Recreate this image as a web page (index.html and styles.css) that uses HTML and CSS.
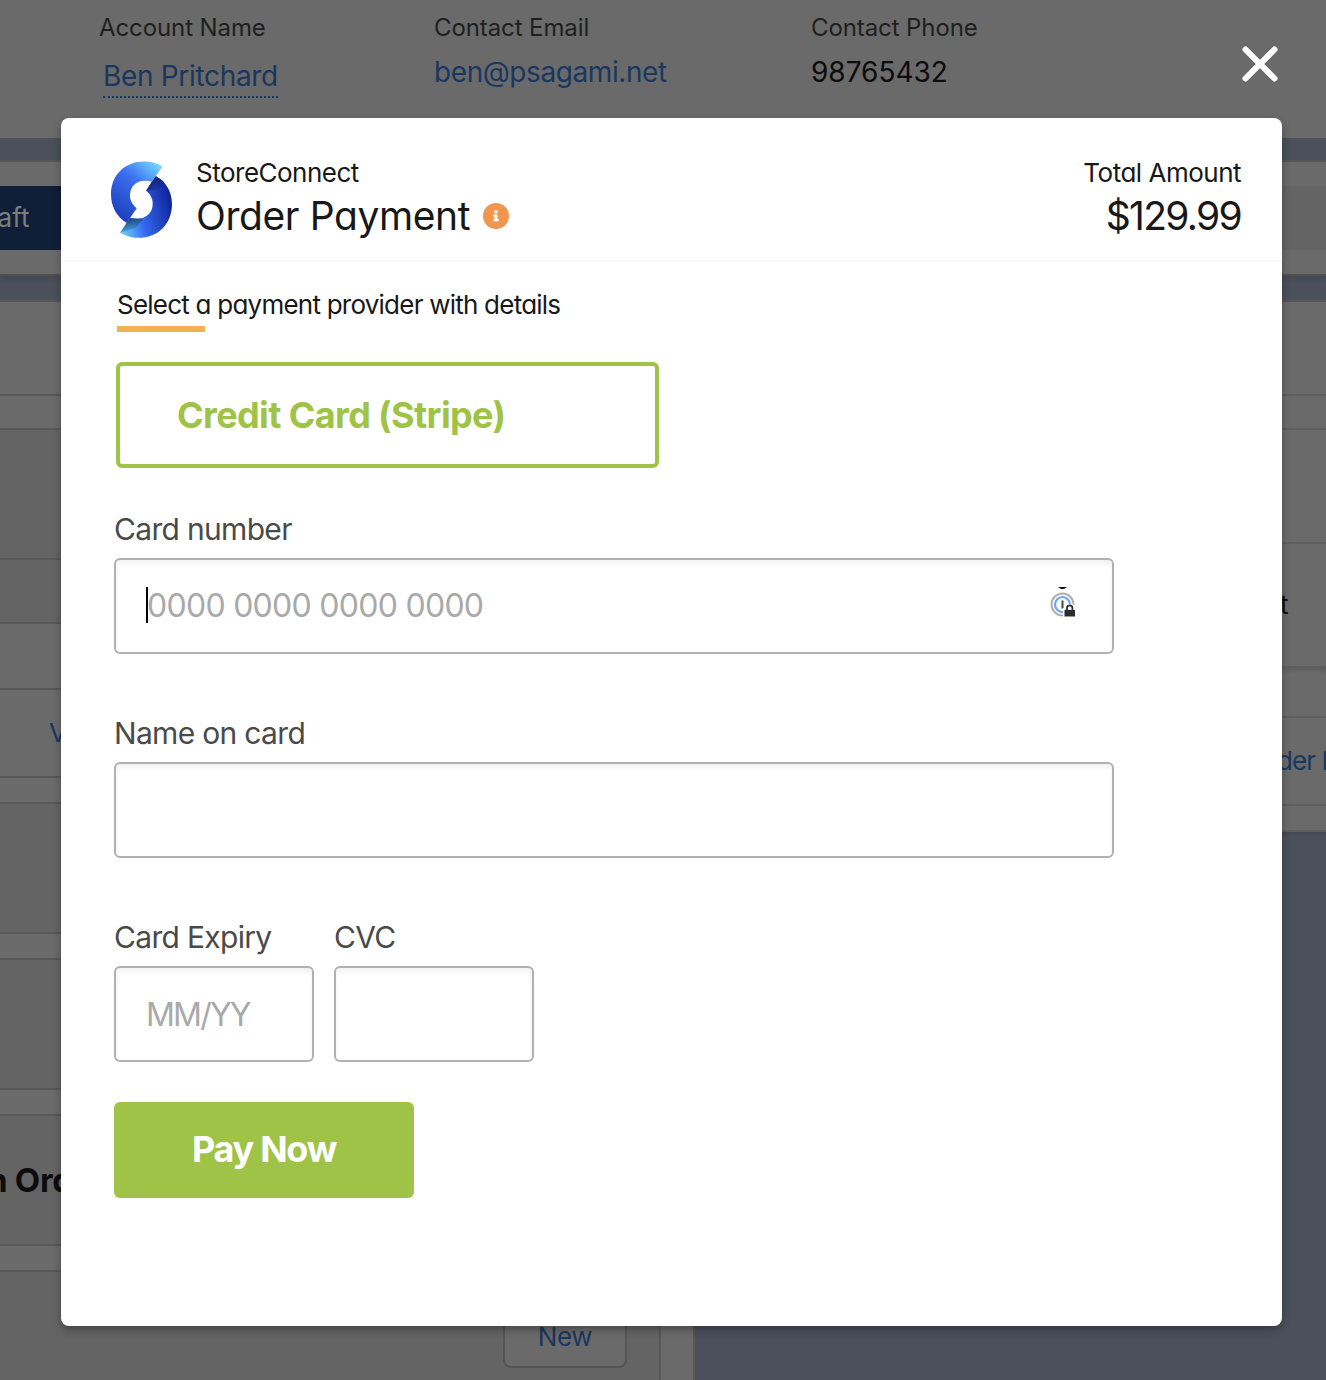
FILE: index.html
```html
<!DOCTYPE html>
<html lang="en">
<head>
    <meta charset="UTF-8">
    <title>Order Payment</title>
    <link rel="stylesheet" href="styles.css">
</head>
<body>

    <div class="page">
        <header class="record-header">
            <div class="field field-account">
                <span class="field-label">Account Name</span>
                <a class="field-value lookup">Ben Pritchard</a>
            </div>
            <div class="field field-email">
                <span class="field-label">Contact Email</span>
                <a class="field-value email">ben@psagami.net</a>
            </div>
            <div class="field">
                <span class="field-label">Contact Phone</span>
                <span class="field-value phone">98765432</span>
            </div>
        </header>

        <div class="path-card">
            <div class="path"><div class="stage"><span>Draft</span></div></div>
        </div>

        <div class="columns">
            <main class="related">
                <div class="row h92"></div>
                <div class="row h32"></div>
                <div class="row grey h128"></div>
                <div class="row grey h62"></div>
                <div class="row h64"></div>
                <div class="row h86 view-all"><a>View</a></div>
                <div class="row h24"></div>
                <div class="row grey h128"></div>
                <div class="row h24"></div>
                <div class="row grey h128"></div>
                <div class="row h24"></div>
                <div class="row grey h128 related-title"><h2>n Order</h2></div>
                <div class="row h24"></div>
                <div class="row grey last"><button class="new-button">New</button></div>
            </main>
            <aside class="side">
                <div class="row h92"></div>
                <div class="row h32"></div>
                <div class="row h112"></div>
                <div class="row h122 side-text"><span>t</span></div>
                <div class="row h48 shade"></div>
                <div class="row h86 side-link"><a>der Payment</a></div>
                <div class="row h24"></div>
            </aside>
        </div>
    </div>

    <button class="close" aria-label="Close">
        <svg width="36" height="36" viewBox="0 0 36 36"><path d="M3.5 3.5l29 29M32.5 3.5l-29 29" stroke="#fff" stroke-width="6" stroke-linecap="round"/></svg>
    </button>

    <section class="modal">
        <div class="modal-header">
            <svg class="logo" width="62" height="78" viewBox="0 0 62 78">
                <defs>
                    <linearGradient id="top" x1="0.9" y1="0" x2="0.2" y2="1">
                        <stop offset="0" stop-color="#78dcff"/>
                        <stop offset="0.4" stop-color="#3c70f2"/>
                        <stop offset="1" stop-color="#1c3cb8"/>
                    </linearGradient>
                    <linearGradient id="bottom" x1="0" y1="0.9" x2="1" y2="0.6">
                        <stop offset="0" stop-color="#6fd3ff"/>
                        <stop offset="0.45" stop-color="#3568ee"/>
                        <stop offset="1" stop-color="#1228a0"/>
                    </linearGradient>
                    <linearGradient id="fold-top" x1="0.2" y1="0.3" x2="0.9" y2="0.8">
                        <stop offset="0" stop-color="#12256e"/>
                        <stop offset="1" stop-color="#12256e" stop-opacity="0"/>
                    </linearGradient>
                    <linearGradient id="fold-bottom" x1="0.3" y1="0.2" x2="0.7" y2="0.9">
                        <stop offset="0" stop-color="#1d4f78"/>
                        <stop offset="1" stop-color="#1d4f78" stop-opacity="0"/>
                    </linearGradient>
                </defs>
                <path d="M44.500 15C55 20 61 31 61 43C61 63 47 76.800 27.500 76.800C20 76.800 14 74.500 9 71.700L19 57C30 60 41.700 55 41.700 43C41.700 37 39 32.500 35 29.700Z" fill="url(#bottom)"/>
                <path d="M44.500 15L35 29.700L51 28L54 21Z" fill="url(#fold-top)"/>
                <path d="M9 71.700L19 57L32 58L25 67Z" fill="url(#fold-bottom)"/>
                <path d="M51.500 5.500C46 2 40 .5 33 .5C14 .5 0 14 0 33C0 46 6 56 15.700 62L25.700 47.300C22 44 19 40 19 34.500C19 23 29 17 41 20.800Z" fill="url(#top)"/>
            </svg>
            <div class="heading">
                <div class="brand">StoreConnect</div>
                <h1><span class="title">Order Payment</span>
                    <svg width="26" height="26" viewBox="0 0 26 26"><circle cx="13" cy="13" r="13" fill="#f0964e"/><circle cx="13" cy="8.700" r="1.800" fill="#fff"/><path d="M10.300 11.500h4.200v4.800h1.200v2h-5.400v-2h1.200v-2.800h-1.200z" fill="#fff"/></svg>
                </h1>
            </div>
            <div class="total">
                <div class="total-label">Total Amount</div>
                <div class="amount">$129.99</div>
            </div>
        </div>

        <form class="payment">
            <p class="prompt">Select a payment provider with details</p>
            <button type="button" class="provider">Credit Card (Stripe)</button>

            <label class="control">
                <span>Card number</span>
                <div class="input">
                    <i class="caret"></i>
                    <span class="placeholder number">0000 0000 0000 0000</span>
                    <svg class="key" width="26" height="34" viewBox="0 0 26 34">
                        <path d="M8 1h9l-3 2h-3z" fill="#111"/>
                        <circle cx="12.500" cy="18.500" r="11" fill="none" stroke="#b0b0b0" stroke-width="2"/>
                        <circle cx="12.500" cy="18.500" r="7.500" fill="none" stroke="#6aa5fb" stroke-width="2.200"/>
                        <path d="M12.500 14.500v8" stroke="#444" stroke-width="2"/>
                        <path d="M13 22h1l2-4h7l3 4v10h-13z" fill="#fff"/>
                        <path d="M14.500 24h10.500v6.500h-10.500z" fill="#2b2b2b"/>
                        <path d="M17 24.500v-2.500a2.700 2.700 0 0 1 5.400 0v2.500" fill="none" stroke="#2b2b2b" stroke-width="1.800"/>
                    </svg>
                </div>
            </label>
            <label class="control">
                <span>Name on card</span>
                <div class="input"></div>
            </label>
            <div class="pair">
                <label class="control">
                    <span>Card Expiry</span>
                    <div class="input"><span class="placeholder expiry">MM/YY</span></div>
                </label>
                <label class="control">
                    <span>CVC</span>
                    <div class="input"></div>
                </label>
            </div>
            <button type="button" class="pay">Pay Now</button>
        </form>
    </section>

</body>
</html>
```
FILE: styles.css
```css
* {
    box-sizing: border-box;
}
body {
    margin: 0;
    height: 1380px;
    overflow: hidden;
    background-color: #4c505c;
    font-family: Inter, "Liberation Sans", sans-serif;
}
h1, h2, p {
    margin: 0;
    font-weight: normal;
}
button {
    padding: 0;
    border: none;
    font-family: inherit;
}
a {
    color: #19375f;
}

/* record page behind the modal */
.page {
    height: 1380px;
    overflow: hidden;
}
.record-header {
    display: flex;
    height: 138px;
    padding: 13px 0 0 99px;
    background-color: #6a6a6a;
}
.field {
    display: flex;
    flex-direction: column;
    align-items: flex-start;
}
.field-account {
    width: 335px;
}
.field-email {
    width: 377px;
}
.field-label {
    font-size: 24px;
    line-height: 30px;
    letter-spacing: -0.1px;
    color: #1f1f1f;
}
.field-value {
    margin-top: 12px;
    font-size: 28px;
    line-height: 34px;
}
.lookup {
    margin: 15px 0 0 4px;
    line-height: 36px;
    padding-bottom: 2px;
    letter-spacing: -0.32px;
    border-bottom: 2px dotted #19375f;
}
.email {
    letter-spacing: -0.42px;
}
.phone {
    color: #0c0c0c;
}
.path-card {
    margin: 22px 0 24px;
    height: 116px;
    padding: 24px 0;
    border-top: 2px solid #575757;
    border-bottom: 2px solid #505050;
    background-color: #6a6a6a;
    box-shadow: 0 3px 4px rgba(0, 0, 0, 0.1);
}
.path {
    height: 64px;
    background-color: #646464;
}
.stage {
    width: 400px;
    height: 64px;
    background-color: #101f38;
    color: #7e7e7e;
    font-size: 26px;
    line-height: 63px;
}
.stage span {
    margin-left: -31px;
}
.columns {
    display: flex;
    justify-content: space-between;
    align-items: flex-start;
}
.related {
    width: 695px;
    height: 1080px;
    border-top: 2px solid #575757;
    border-right: 2px solid #575757;
    background-color: #6a6a6a;
}
.side {
    width: 607px;
    border-top: 2px solid #575757;
    background-color: #6a6a6a;
    box-shadow: 0 3px 4px rgba(0, 0, 0, 0.1);
}
.row {
    box-sizing: content-box;
    border-bottom: 2px solid #585858;
}
.side .row {
    border-color: #5f5f5f;
}
.related .grey {
    width: 659px;
    background-color: #646464;
    border-right: 2px solid #585858;
}
.h24 { height: 24px; }
.h32 { height: 32px; }
.h48 { height: 48px; }
.h62 { height: 62px; }
.h64 { height: 64px; }
.h86 { height: 86px; }
.h92 { height: 92px; }
.h112 { height: 112px; }
.h122 { height: 122px; }
.h128 { height: 128px; }
.side .shade {
    box-shadow: inset 0 4px 4px -2px rgba(0, 0, 0, 0.15);
}
.view-all {
    padding-left: 49px;
    font-size: 26px;
    line-height: 86px;
}
.related-title h2 {
    margin-left: -13px;
    font-size: 33px;
    font-weight: 700;
    line-height: 129px;
    letter-spacing: -0.3px;
    color: #0c0c0c;
}
.last {
    height: 108px;
    display: flex;
    justify-content: flex-end;
}
.new-button {
    width: 124px;
    height: 64px;
    margin: 32px 32px 0 0;
    border: 2px solid #555;
    border-radius: 8px;
    background-color: #6a6a6a;
    color: #19375f;
    font-size: 26px;
    letter-spacing: -0.3px;
}
.side-text {
    padding-left: 561px;
    font-size: 26px;
    line-height: 122px;
    color: #0c0c0c;
}
.side-link {
    padding-left: 558px;
    font-size: 26px;
    line-height: 86px;
    letter-spacing: -0.9px;
    white-space: nowrap;
}

/* modal */
.close {
    position: absolute;
    left: 1242px;
    top: 46px;
    background: none;
}
.close svg {
    display: block;
}
.modal {
    position: absolute;
    left: 61px;
    top: 118px;
    width: 1221px;
    height: 1208px;
    border-radius: 8px;
    background-color: #fff;
    box-shadow: 0 4px 8px rgba(0, 0, 0, 0.3);
    color: #181818;
}
.modal-header {
    display: flex;
    height: 144px;
    padding: 36px 41px 0 50px;
    border-bottom: 2px solid #f9f9f9;
}
.logo {
    margin: 7px 23px 0 0;
}
.heading, .total {
    flex: 1;
    font-feature-settings: "cv11";
}
.brand, .total-label {
    font-size: 26px;
    line-height: 37px;
    letter-spacing: -0.5px;
}
h1, .amount {
    display: flex;
    align-items: center;
    gap: 13px;
    font-size: 39px;
    line-height: 50px;
    letter-spacing: -0.4px;
}
.total {
    text-align: right;
}
.amount {
    display: block;
    letter-spacing: -1.7px;
}
.payment {
    padding: 27px 0 0 53px;
}
.prompt {
    margin-left: 3px;
    font-size: 26px;
    line-height: 31px;
    letter-spacing: -0.77px;
    font-feature-settings: "cv11";
}
.prompt::after {
    content: "";
    display: block;
    width: 88px;
    height: 6px;
    margin-top: 6px;
    background-color: #f0b252;
}
.provider {
    display: block;
    width: 543px;
    height: 106px;
    margin: 30px 0 45px 2px;
    padding-left: 57px;
    border: 4px solid #9fc347;
    border-radius: 6px;
    background-color: #fff;
    color: #9fc347;
    font-size: 36px;
    font-weight: 700;
    letter-spacing: -0.62px;
    text-align: left;
}
.control {
    display: block;
    margin-bottom: 63px;
    font-size: 30px;
    line-height: 32px;
    letter-spacing: -0.68px;
    color: #4a4a4a;
}
.input {
    display: flex;
    align-items: center;
    width: 1000px;
    height: 96px;
    margin-top: 13px;
    padding: 0 36px 0 30px;
    border: 2px solid #b1b1b1;
    border-radius: 6px;
    box-shadow: inset 0 4px 4px rgba(0, 0, 0, 0.05);
}
.caret {
    width: 2px;
    height: 36px;
    margin-top: -2px;
    background-color: #000;
}
.placeholder {
    font-size: 32px;
    color: #a9a9a9;
}
.number {
    margin-left: -1px;
    letter-spacing: -0.72px;
}
.expiry {
    padding-top: 2px;
    letter-spacing: -1.8px;
}
.key {
    margin: -6px 0 0 auto;
}
.pair {
    display: flex;
    gap: 20px;
}
.pair .control {
    margin-bottom: 40px;
}
.pair .input {
    width: 200px;
    padding-right: 0;
}
.pay {
    display: block;
    width: 300px;
    height: 96px;
    padding-bottom: 2px;
    border-radius: 6px;
    background-color: #9fc347;
    color: #fff;
    font-size: 36px;
    font-weight: 700;
    letter-spacing: -1.3px;
}
```
